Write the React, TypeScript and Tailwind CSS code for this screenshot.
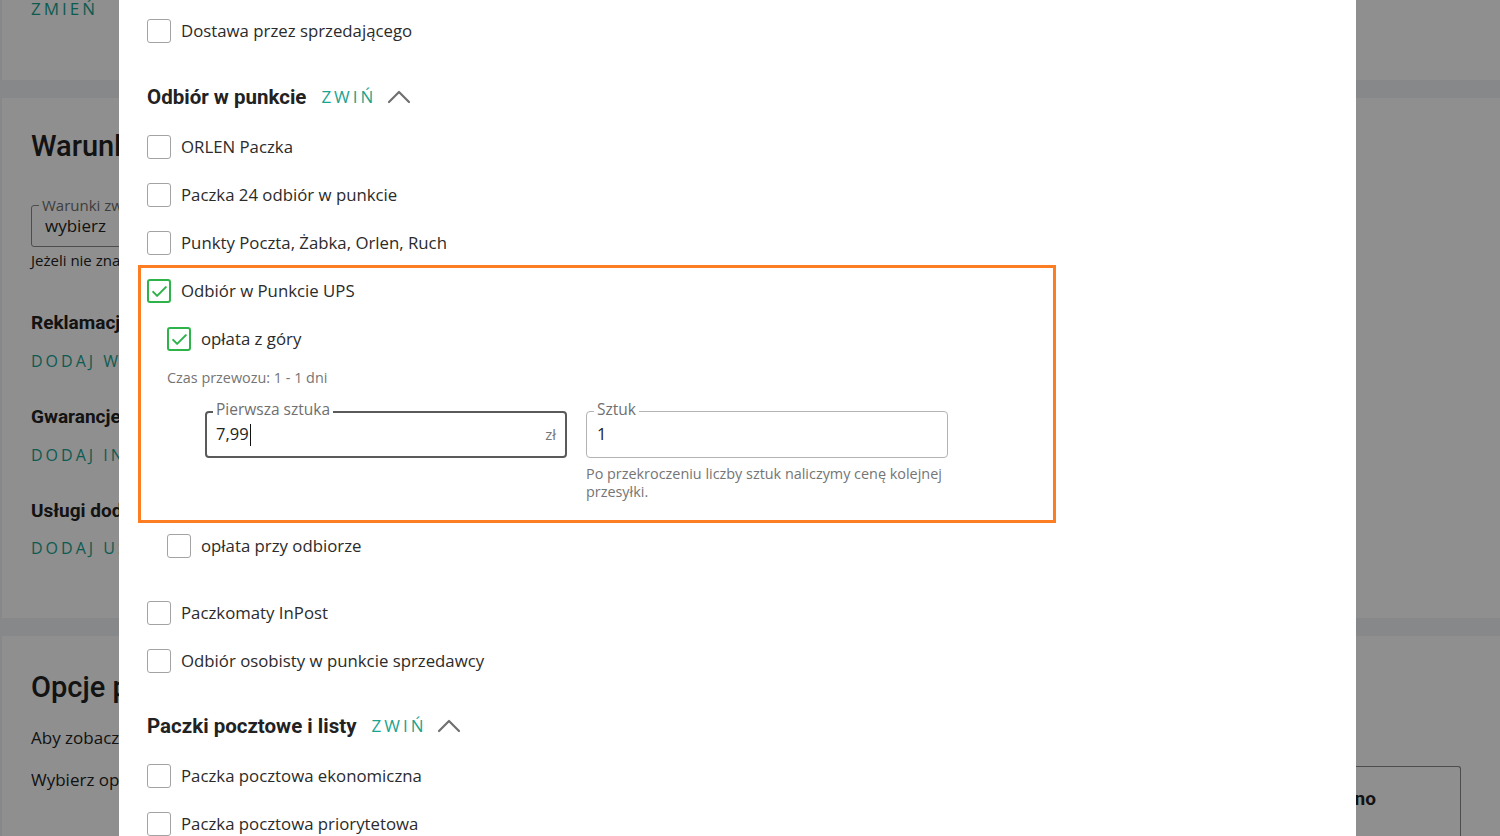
import { ReactNode } from "react";

const body = "font-['Open_Sans',sans-serif]";
const head = "font-['Roboto',sans-serif]";

function Box({ checked }: { checked?: boolean }) {
    if (checked) {
        return (
            <span className="flex h-6 w-6 shrink-0 items-center justify-center rounded-[3px] border-2 border-[#2db34a]">
                <svg viewBox="0 0 24 24" className="h-[19px] w-[19px]" fill="none" stroke="#2db34a" strokeWidth="2.6" strokeLinecap="round" strokeLinejoin="round">
                    <path d="M4 12.5l5 5L20 6.5" />
                </svg>
            </span>
        );
    }
    return <span className="h-6 w-6 shrink-0 rounded-[3px] border border-[#a3a3a3]" />;
}

function Row({ label, checked, indent }: { label: string, checked?: boolean, indent?: boolean }) {
    return (
        <div className={`flex h-12 items-center gap-[10px] ${indent ? "pl-5" : ""}`}>
            <Box checked={checked} />
            <span className="text-[16.8px] text-[#2b2b2b]">{label}</span>
        </div>
    );
}

function Group({ title, pt }: { title: string, pt: string }) {
    return (
        <div className={`flex items-center gap-[15px] pb-[14px] ${pt}`}>
            <h2 className={`${head} text-[20.5px] font-bold leading-6 text-[#222]`}>{title}</h2>
            <span className="text-[17px] leading-6 tracking-[3px] text-[#1aa38f]">ZWIŃ</span>
            <svg viewBox="0 0 24 14" className="-ml-[4px] h-[14px] w-6" fill="none" stroke="#707070" strokeWidth="2.2" strokeLinecap="round" strokeLinejoin="round">
                <path d="M2 12L12 2l10 10" />
            </svg>
        </div>
    );
}

function Field({ label, value, focused, suffix, children }: { label: string, value: string, focused?: boolean, suffix?: string, children?: ReactNode }) {
    return (
        <div className="w-[362px]">
            <div className={`relative flex h-[47px] items-center rounded-[4px] ${focused ? "border-2 border-[#5a5a5a] pl-[9px] pr-[9px]" : "border border-[#b3b3b3] pl-[10px] pr-[10px]"}`}>
                <span className={`absolute ${focused ? "-top-[14px] left-[6px]" : "-top-[13px] left-[7px]"} bg-white px-[3px] text-[15.5px] leading-5 text-[#6f6f6f]`}>{label}</span>
                <span className="text-[16.5px] text-[#222]">{value}</span>
                {focused && <span className="ml-[1px] h-[22px] w-px bg-[#111]" />}
                {suffix && <span className="ml-auto text-[15px] text-[#777]">{suffix}</span>}
            </div>
            {children}
        </div>
    );
}

function Background() {
    return (
        <div className={`${body} flex h-[836px] flex-col gap-[18px] bg-[#f1f3f5] pl-[2px]`}>
            <div className="h-[80px] shrink-0 bg-white pl-[29px]">
                <div className="-mt-[4px] text-[17px] tracking-[3px] text-[#1aa38f]">ZMIEŃ</div>
            </div>
            <div className="h-[520px] shrink-0 bg-white pl-[29px] pt-[30px]">
                <h2 className={`${head} text-[29px] font-medium leading-9 text-[#222]`}>Warunki oferty</h2>
                <div className="mt-[41px] w-[300px]">
                    <div className="relative flex h-[42px] items-center rounded-[3px] border border-[#8a8a8a] pl-[13px]">
                        <span className="absolute -top-[11px] left-[7px] bg-white px-[3px] text-[15px] leading-5 text-[#6f6f6f]">Warunki zwrotów</span>
                        <span className="text-[17px] text-[#222]">wybierz</span>
                    </div>
                </div>
                <p className="mt-px text-[15px] leading-6 text-[#222]">Jeżeli nie znajdziesz odpowiednich warunków, dodaj nowe</p>
                <h3 className={`${head} mt-[39px] text-[19px] font-bold leading-6 text-[#222]`}>Reklamacje</h3>
                <div className="mt-[14px] text-[16px] leading-6 tracking-[3px] text-[#1aa38f]">DODAJ WARUNKI</div>
                <h3 className={`${head} mt-[32px] text-[19px] font-bold leading-6 text-[#222]`}>Gwarancje</h3>
                <div className="mt-[14px] text-[16px] leading-6 tracking-[3px] text-[#1aa38f]">DODAJ INFORMACJE</div>
                <h3 className={`${head} mt-[32px] text-[19px] font-bold leading-6 text-[#222]`}>Usługi dodatkowe</h3>
                <div className="mt-[13px] text-[16px] leading-6 tracking-[3px] text-[#1aa38f]">DODAJ USŁUGI</div>
            </div>
            <div className="flex flex-1 justify-between bg-white pl-[29px] pr-[39px]">
                <div className="pt-[33px]">
                    <h2 className={`${head} text-[29px] font-medium leading-9 text-[#222]`}>Opcje promowania</h2>
                    <p className="mt-[21px] text-[17px] leading-6 text-[#222]">Aby zobaczyć szczegóły, wybierz pakiet</p>
                    <p className="mt-[18px] text-[17px] leading-6 text-[#222]">Wybierz opcję promowania</p>
                </div>
                <div className="mt-[130px] flex w-[200px] items-start rounded-t-[3px] border border-b-0 border-[#8a8a8a] pl-[13px] pt-[20px]">
                    <span className={`${head} text-[19px] font-bold leading-6 text-[#222]`}>Wyróżniono</span>
                </div>
            </div>
        </div>
    );
}

export default function App() {
    return (
        <div className="relative h-[836px] w-[1500px] overflow-hidden">
            <Background />
            <div className="absolute inset-0 bg-black/[0.44]" />
            <div className={`${body} absolute bottom-0 left-[119px] top-0 w-[1237px] bg-white pl-7 pt-[7px]`}>
                <Row label="Dostawa przez sprzedającego" />
                <Group title="Odbiór w punkcie" pt="pt-[30px]" />
                <Row label="ORLEN Paczka" />
                <Row label="Paczka 24 odbiór w punkcie" />
                <Row label="Punkty Poczta, Żabka, Orlen, Ruch" />
                <div className="relative">
                    <div className="absolute -left-[9px] -top-[2px] h-[258px] w-[918px] border-[3px] border-[#fd7e22]" />
                    <Row label="Odbiór w Punkcie UPS" checked />
                    <Row label="opłata z góry" checked indent />
                    <div className="mt-[5px] pl-5 text-[14.4px] leading-5 text-[#757575]">Czas przewozu: 1 - 1 dni</div>
                    <div className="mt-[23px] flex gap-[19px] pl-[58px]">
                        <Field label="Pierwsza sztuka" value="7,99" focused suffix="zł" />
                        <Field label="Sztuk" value="1">
                            <p className="mt-[7px] text-[14.4px] leading-[18px] text-[#757575]">Po przekroczeniu liczby sztuk naliczymy cenę kolejnej przesyłki.</p>
                        </Field>
                    </div>
                    <div className="h-[21px]" />
                </div>
                <Row label="opłata przy odbiorze" indent />
                <div className="h-[19px]" />
                <Row label="Paczkomaty InPost" />
                <Row label="Odbiór osobisty w punkcie sprzedawcy" />
                <Group title="Paczki pocztowe i listy" pt="pt-[29px]" />
                <Row label="Paczka pocztowa ekonomiczna" />
                <Row label="Paczka pocztowa priorytetowa" />
            </div>
        </div>
    );
}
